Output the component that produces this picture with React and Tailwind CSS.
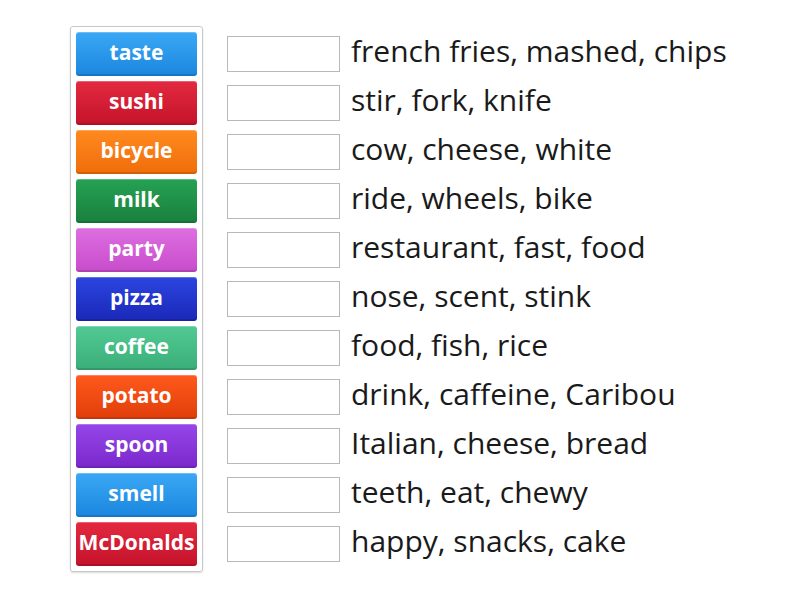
const items = [
  { label: 'taste', from: '#3aa8f5', to: '#1b86de' },
  { label: 'sushi', from: '#e3293f', to: '#c4132b' },
  { label: 'bicycle', from: '#ff8a1f', to: '#f06d0a' },
  { label: 'milk', from: '#25a253', to: '#1a7f3d' },
  { label: 'party', from: '#de6ee0', to: '#c84ccb' },
  { label: 'pizza', from: '#2c45e0', to: '#1a28b8' },
  { label: 'coffee', from: '#52c994', to: '#3aae79' },
  { label: 'potato', from: '#ff5a1c', to: '#e03d0a' },
  { label: 'spoon', from: '#9646e8', to: '#7a28cc' },
  { label: 'smell', from: '#3aa8f5', to: '#1b86de' },
  { label: 'McDonalds', from: '#e3293f', to: '#c4132b' },
];

const clues = [
  'french fries, mashed, chips',
  'stir, fork, knife',
  'cow, cheese, white',
  'ride, wheels, bike',
  'restaurant, fast, food',
  'nose, scent, stink',
  'food, fish, rice',
  'drink, caffeine, Caribou',
  'Italian, cheese, bread',
  'teeth, eat, chewy',
  'happy, snacks, cake',
];

export default function App() {
  return (
    <div
      className="w-[800px] h-[600px] bg-white flex items-start pt-[26px] pl-[70px]"
      style={{ fontFamily: '"Open Sans", "Noto Sans", sans-serif' }}
    >
      <div className="w-[133px] border border-[#c8c8c8] rounded-[3px] p-[5px] flex flex-col gap-[5px] shadow-[0_1px_2px_rgba(0,0,0,0.15)]">
        {items.map((it) => (
          <div
            key={it.label}
            className="h-[44px] rounded-[3px] flex items-center justify-center pb-[3px] text-white font-bold text-[21px] shadow-[inset_0_1px_0_rgba(255,255,255,0.25),inset_0_-2px_0_rgba(0,0,0,0.12)]"
            style={{ background: `linear-gradient(${it.from}, ${it.to})` }}
          >
            {it.label}
          </div>
        ))}
      </div>
      <div className="ml-[24px] pt-[6px] flex flex-col gap-[5px]">
        {clues.map((c) => (
          <div key={c} className="h-[44px] flex items-center">
            <div className="w-[113px] h-[36px] border border-[#b8b8b8] bg-white" />
            <span className="ml-[11px] mb-[6px] text-[30px] text-[#1a1a1a] leading-none whitespace-nowrap">{c}</span>
          </div>
        ))}
      </div>
    </div>
  );
}
